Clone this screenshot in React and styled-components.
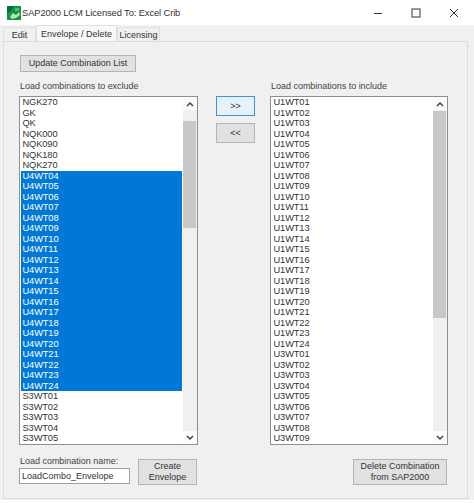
import React from "react";
import styled, { createGlobalStyle } from "styled-components";

const Global = createGlobalStyle`
  html, body { margin: 0; padding: 0; background: #fff; }
  body { font-family: "Liberation Sans", Arial, sans-serif; }
`;

const Win = styled.div`
  width: 474px; height: 503px; background: #fff; overflow: hidden;
  display: flex; flex-direction: column; color: #333; font-size: 9px;
`;
const TitleBar = styled.div`
  height: 25px; flex: none; display: flex; align-items: center; padding-left: 7px; padding-right: 1px; background: #fff;
`;
const Logo = styled.svg` width: 15px; height: 14px; flex: none; `;
const Title = styled.div` font-size: 9.4px; letter-spacing: -0.12px; color: #333; flex: 1; white-space: nowrap; `;
const Ctl = styled.div` width: 38px; height: 25px; display: flex; align-items: center; justify-content: center; `;
const Body = styled.div` height: 475px; flex: none; background: #f0f0f0; display: flex; flex-direction: column; `;
const Tabs = styled.div` display: flex; align-items: flex-end; height: 16px; flex: none; padding-left: 3px; `;
const Tab = styled.div`
  height: ${p => (p.$active ? 16 : 14)}px; width: ${p => p.$w}px; box-sizing: border-box; flex: none;
  background: ${p => (p.$active ? "#f8f8f8" : "#f0f0f0")};
  border: 1px solid #e0e0e0; border-bottom: none;
  display: flex; align-items: center; justify-content: center; white-space: nowrap; font-size: 9px; color: #333;
`;
const Panel = styled.div`
  margin: 0 6px 0 3px; height: 458px; flex: none; box-sizing: border-box;
  border: 1px solid #dcdcdc; background: #f0f0f0;
  padding: 13px 0 0 15px; display: flex; flex-direction: column;
`;
const Button = styled.div`
  box-sizing: border-box; width: ${p => p.$w}px; height: ${p => p.$h}px; flex: none;
  background: ${p => (p.$primary ? "#e5f1fb" : "#e1e1e1")};
  border: 1px solid ${p => (p.$primary ? "#3f93d6" : "#b4b4b4")};
  display: flex; align-items: center; justify-content: center; text-align: center;
  line-height: 11px; font-size: 9px; color: #333;
`;
const TopButton = styled(Button)` margin-left: 1px; `;
const Columns = styled.div` display: flex; margin-top: 8px; `;
const Col = styled.div` display: flex; flex-direction: column; width: ${p => p.$w}px; flex: none; `;
const Label = styled.div` height: 13px; line-height: 13px; font-size: 9px; letter-spacing: -0.02px; padding-left: 1px; color: #444; white-space: nowrap; `;
const ListBox = styled.div`
  box-sizing: border-box; height: 349px; margin-top: 3px;
  background: #fff; border: 1px solid #8f8f8f; display: flex; overflow: hidden;
`;
const Items = styled.div` flex: 1; min-width: 0; overflow: hidden; margin: 0 1px; padding-top: 0; `;
const Item = styled.div`
  height: 10.5px; line-height: 10.5px; padding-left: 1.5px; font-size: 9.3px; letter-spacing: -0.12px; white-space: nowrap;
  background: ${p => (p.$sel ? "#0078d7" : "transparent")};
  color: ${p => (p.$sel ? "#fff" : "#333")};
`;
const Scroll = styled.div` width: 14px; flex: none; background: #f0f0f0; display: flex; flex-direction: column; `;
const Arrow = styled.div` height: 13px; flex: none; background: #fbfbfb; display: flex; align-items: center; justify-content: center; `;
const Track = styled.div` flex: 1; min-height: 0; padding-top: ${p => p.$offset}px; `;
const Thumb = styled.div` height: ${p => p.$h}px; width: 13px; background: #c8c8c8; `;
const Mid = styled.div` width: 54px; flex: none; padding: 16px 0 0 18px; display: flex; flex-direction: column; gap: 7px; `;
const Footer = styled.div` display: flex; margin-top: 10px; align-items: flex-start; `;
const NameCol = styled.div` display: flex; flex-direction: column; width: 119px; flex: none; `;
const Input = styled.div`
  box-sizing: border-box; width: 111px; height: 16px; border: 1px solid #a0a0a0; background: #fff;
  font-size: 9px; line-height: 14px; padding-left: 2px; color: #333; white-space: nowrap; overflow: hidden;
`;
const FooterButton = styled(Button)` margin-top: 4px; `;
const Spacer = styled.div` width: 156px; flex: none; `;

const exclude = [
  ["NGK270"], ["GK"], ["QK"], ["NQK000"], ["NQK090"], ["NQK180"], ["NQK270"],
  ...Array.from({ length: 21 }, (_, i) => ["U4WT" + String(i + 4).padStart(2, "0"), true]),
  ["S3WT01"], ["S3WT02"], ["S3WT03"], ["S3WT04"], ["S3WT05"],
];
const include = [
  ...Array.from({ length: 24 }, (_, i) => "U1WT" + String(i + 1).padStart(2, "0")),
  ...Array.from({ length: 9 }, (_, i) => "U3WT" + String(i + 1).padStart(2, "0")),
];

const Chev = ({ up }) => (
  <svg width="8" height="6" viewBox="0 0 8 6">
    <path d={up ? "M1 5L4 2L7 5" : "M1 1L4 4L7 1"} fill="none" stroke="#444" strokeWidth="1.5" />
  </svg>
);

const Bar = ({ thumb, offset }) => (
  <Scroll>
    <Arrow><Chev up /></Arrow>
    <Track $offset={offset}><Thumb $h={thumb} /></Track>
    <Arrow><Chev /></Arrow>
  </Scroll>
);

export default function App() {
  return (
    <Win>
      <Global />
      <TitleBar>
        <Logo viewBox="0 0 15 14">
          <rect width="14" height="14" fill="#14934a" />
          <path d="M0 0H7L4 5L0 7Z" fill="#0c6b34" />
          <path d="M3 11L6 7L9 9L12 6L13 9L9 12L5 13Z" fill="#b9e6b0" />
          <path d="M8 2H12V5H8Z" fill="#3fc06a" />
        </Logo>
        <Title>SAP2000 LCM Licensed To: Excel Crib</Title>
        <Ctl>
          <svg width="10" height="10" viewBox="0 0 10 10"><path d="M1 5.5H9" stroke="#333" /></svg>
        </Ctl>
        <Ctl>
          <svg width="10" height="10" viewBox="0 0 10 10"><rect x="1" y="1" width="8" height="8" fill="none" stroke="#333" /></svg>
        </Ctl>
        <Ctl>
          <svg width="10" height="10" viewBox="0 0 10 10"><path d="M1 1L9 9M9 1L1 9" stroke="#333" /></svg>
        </Ctl>
      </TitleBar>
      <Body>
        <Tabs>
          <Tab $w={33}>Edit</Tab>
          <Tab $active $w={81}>Envelope / Delete</Tab>
          <Tab $w={43}>Licensing</Tab>
        </Tabs>
        <Panel>
          <TopButton $w={116} $h={17}>Update Combination List</TopButton>
          <Columns>
            <Col $w={179}>
              <Label>Load combinations to exclude</Label>
              <ListBox>
                <Items>{exclude.map(([t, s], i) => <Item key={i} $sel={s}>{t}</Item>)}</Items>
                <Bar thumb={107} offset={11} />
              </ListBox>
            </Col>
            <Mid>
              <Button $primary $w={39} $h={20}>&gt;&gt;</Button>
              <Button $w={39} $h={20}>&lt;&lt;</Button>
            </Mid>
            <Col $w={178}>
              <Label>Load combinations to include</Label>
              <ListBox>
                <Items>{include.map((t, i) => <Item key={i}>{t}</Item>)}</Items>
                <Bar thumb={207} offset={1} />
              </ListBox>
            </Col>
          </Columns>
          <Footer>
            <NameCol>
              <Label>Load combination name:</Label>
              <Input>LoadCombo_Envelope</Input>
            </NameCol>
            <FooterButton $w={59} $h={26}>Create<br />Envelope</FooterButton>
            <Spacer />
            <FooterButton $w={94} $h={26}>Delete Combination<br />from SAP2000</FooterButton>
          </Footer>
        </Panel>
      </Body>
    </Win>
  );
}
